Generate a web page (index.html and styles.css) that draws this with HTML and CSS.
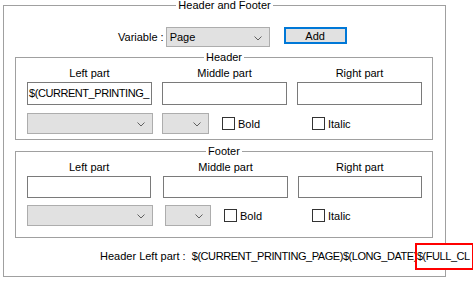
FILE: index.html
```html
<!DOCTYPE html>
<html lang="en">
  <head>
    <meta charset="utf-8" />
    <title>Header and Footer</title>
    <link rel="stylesheet" href="styles.css">
  </head>
  <body>
    <fieldset class="group outer">
      <legend>Header and Footer</legend>

      <div class="variable-row">
        <span class="variable-label">Variable :</span>
        <div class="combo variable-combo">
          <span class="combo-text">Page</span>
          <svg class="chevron" width="8" height="5" viewBox="0 0 8 5"><path d="M0.5 0.5 L4 4 L7.5 0.5" fill="none" stroke="#606060" stroke-width="1"/></svg>
        </div>
        <button class="add-button">Add</button>
      </div>

      <fieldset class="group section header-section">
        <legend>Header</legend>
        <div class="parts">
          <div class="part">
            <div class="part-label">Left part</div>
            <div class="text-box"><span class="code">$(CURRENT_PRINTING_</span></div>
          </div>
          <div class="part">
            <div class="part-label">Middle part</div>
            <div class="text-box"></div>
          </div>
          <div class="part">
            <div class="part-label">Right part</div>
            <div class="text-box"></div>
          </div>
        </div>
        <div class="format-row">
          <div class="combo font-combo">
            <svg class="chevron" width="8" height="5" viewBox="0 0 8 5"><path d="M0.5 0.5 L4 4 L7.5 0.5" fill="none" stroke="#606060" stroke-width="1"/></svg>
          </div>
          <div class="combo size-combo">
            <svg class="chevron" width="8" height="5" viewBox="0 0 8 5"><path d="M0.5 0.5 L4 4 L7.5 0.5" fill="none" stroke="#606060" stroke-width="1"/></svg>
          </div>
          <label class="check bold-check"><span class="box"></span>Bold</label>
          <label class="check italic-check"><span class="box"></span>Italic</label>
        </div>
      </fieldset>

      <fieldset class="group section footer-section">
        <legend>Footer</legend>
        <div class="parts">
          <div class="part">
            <div class="part-label">Left part</div>
            <div class="text-box"></div>
          </div>
          <div class="part">
            <div class="part-label">Middle part</div>
            <div class="text-box"></div>
          </div>
          <div class="part">
            <div class="part-label">Right part</div>
            <div class="text-box"></div>
          </div>
        </div>
        <div class="format-row">
          <div class="combo font-combo">
            <svg class="chevron" width="8" height="5" viewBox="0 0 8 5"><path d="M0.5 0.5 L4 4 L7.5 0.5" fill="none" stroke="#606060" stroke-width="1"/></svg>
          </div>
          <div class="combo size-combo">
            <svg class="chevron" width="8" height="5" viewBox="0 0 8 5"><path d="M0.5 0.5 L4 4 L7.5 0.5" fill="none" stroke="#606060" stroke-width="1"/></svg>
          </div>
          <label class="check bold-check"><span class="box"></span>Bold</label>
          <label class="check italic-check"><span class="box"></span>Italic</label>
        </div>
      </fieldset>

      <div class="preview">
        Header Left part :&nbsp; <span class="code">$(CURRENT_PRINTING_PAGE)$(LONG_DATE)$(FULL_CL</span>
        <span class="highlight"></span>
      </div>
    </fieldset>
  </body>
</html>
```

FILE: styles.css
```css
* {
  box-sizing: border-box;
}

body {
  margin: 0;
  padding: 0 0 0 3px;
  width: 473px;
  height: 284px;
  overflow: hidden;
  background: #ffffff;
  font-family: "Liberation Sans", Arial, sans-serif;
  font-size: 11px;
  color: #000000;
}

.group {
  margin: 0;
  border: 1px solid #a0a0a0;
  min-width: 0;
}

.group legend {
  margin: 0 auto;
  padding: 0 2px;
  line-height: 11px;
}

.code {
  letter-spacing: -0.44px;
}

.outer {
  width: 443px;
  height: 277px;
  padding: 0;
}

.variable-row {
  display: flex;
  align-items: flex-start;
  margin-top: 16px;
  padding-left: 114px;
}

.variable-label {
  margin-top: 4px;
  margin-right: 2px;
}

.combo {
  position: relative;
  height: 21px;
  background: #e1e1e1;
  border: 1px solid #adadad;
}

.combo-text {
  display: block;
  padding: 3px 0 0 3px;
}

.chevron {
  position: absolute;
  right: 7px;
  top: 8px;
}

.variable-combo {
  width: 104px;
  height: 20px;
}

.add-button {
  margin-left: 14px;
  width: 63px;
  height: 17px;
  padding: 0;
  background: #e1e1e1;
  border: 2px solid #0078d7;
  font-family: inherit;
  font-size: 11px;
  line-height: 12px;
}

.section {
  width: 418px;
  margin: 5px 0 0 11px;
  padding: 4px 10px 0 10px;
}

.header-section {
  height: 88px;
}

.footer-section {
  margin-top: 6px;
  height: 92px;
}

.parts {
  display: flex;
  gap: 10px;
  margin-left: 1px;
}

.part {
  width: 125px;
}

.part-label {
  text-align: center;
  height: 13px;
  margin-bottom: 2px;
}

.text-box {
  height: 23px;
  border: 1px solid #7a7a7a;
  padding: 4px 0 0 1px;
  white-space: nowrap;
  overflow: hidden;
}

.format-row {
  display: flex;
  align-items: center;
  margin: 8px 0 0 1px;
}

.font-combo {
  width: 126px;
}

.size-combo {
  width: 47px;
  margin-left: 9px;
}

.check {
  display: flex;
  align-items: center;
}

.box {
  width: 13px;
  height: 13px;
  border: 1px solid #333333;
  background: #ffffff;
  margin-right: 3px;
}

.bold-check {
  width: 90px;
  margin-left: 13px;
}

.footer-section .text-box {
  height: 22px;
}

.footer-section .part:nth-child(2) {
  margin-left: 2px;
}

.footer-section .format-row {
  margin-top: 7px;
}

.footer-section .size-combo {
  width: 46px;
  margin-left: 12px;
}

.footer-section .bold-check {
  width: 88px;
}

.preview {
  position: relative;
  margin: 5px -40px 0 96px;
  height: 27px;
  line-height: 27px;
  background: #ffffff;
  white-space: nowrap;
}

.highlight {
  position: absolute;
  left: 315px;
  top: 0;
  width: 59px;
  height: 27px;
  border: 2px solid #ff0000;
}
```
